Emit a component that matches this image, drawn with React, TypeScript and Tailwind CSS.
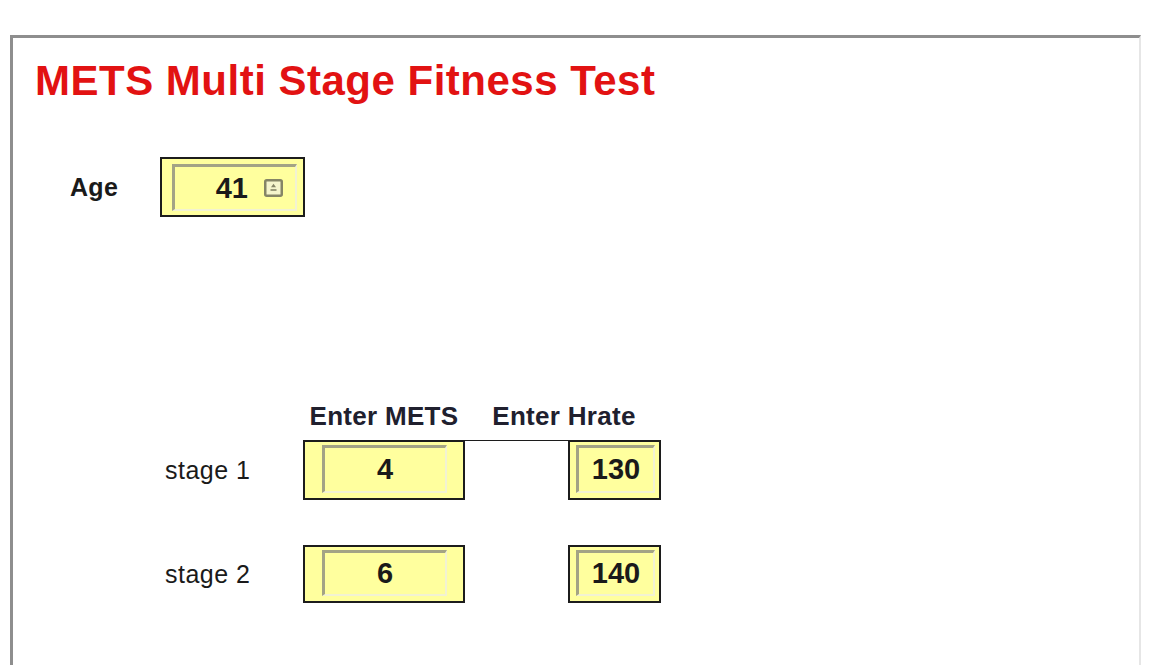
import React from "react";

const font = { fontFamily: '"Liberation Sans", Arial, sans-serif' };

function Bevel({ children, className }: { children: React.ReactNode; className: string }) {
  return (
    <div className={"flex items-center border-l-[3px] border-t-[3px] border-l-[#a3a385] border-t-[#a3a385] border-r-2 border-b-2 border-r-[#f2f2d2] border-b-[#f2f2d2] bg-[#ffff9e] " + className}>
      {children}
    </div>
  );
}

function Spinner() {
  return (
    <svg width="19" height="18" viewBox="0 0 19 18" className="block">
      <rect x="1.25" y="1.25" width="16.5" height="15.5" rx="1.5" fill="#f5f5cc" stroke="#858566" strokeWidth="2.5" />
      <path d="M9.5 4.8 L12 8.3 L7 8.3 Z" fill="#858566" />
      <line x1="6.5" y1="11" x2="12.5" y2="11" stroke="#858566" strokeWidth="1.6" />
    </svg>
  );
}

export default function App() {
  return (
    <div className="w-[1160px] h-[665px] overflow-hidden bg-white" style={font}>
      <div className="ml-[10px] mt-[35px] w-[1131px] h-[700px] border-l-[3px] border-t-[3px] border-l-[#8e8e8e] border-t-[#8e8e8e] border-r-2 border-r-[#e6e6e6]">
        <h1 className="ml-[22px] mt-[22px] text-[42px] leading-none font-bold text-[#e21212] tracking-[0.5px]">
          METS Multi Stage Fitness Test
        </h1>

        <div className="flex items-center ml-[57px] mt-[55px]">
          <div className="w-[90px] text-[25px] leading-none font-bold text-[#1a1a1a] tracking-[0.3px]">Age</div>
          <div className="w-[145px] h-[60px] border-2 border-[#1c1c1c] bg-[#ffff9e] pl-[10px] pr-[6px] pt-[5px] pb-[4px] flex">
            <Bevel className="flex-1 justify-end pr-[12px]">
              <span className="text-[29px] leading-none font-bold text-[#1a1a1a] mr-[16px]">41</span>
              <Spinner />
            </Bevel>
          </div>
        </div>

        <div className="ml-[290px] mt-[186px] flex h-[37px] items-start">
          <div className="w-[162px] text-center text-[26px] leading-none font-bold text-[#20202e] tracking-[0.3px]">Enter METS</div>
          <div className="w-[198px] text-center text-[26px] leading-none font-bold text-[#20202e] tracking-[0.3px]">Enter Hrate</div>
        </div>

        <div className="ml-[152px] flex items-start">
          <div className="w-[138px] h-[60px] flex items-center text-[25px] leading-none text-[#1a1a1a] tracking-[0.5px]">stage 1</div>
          <div className="w-[162px] h-[60px] border-2 border-[#1c1c1c] bg-[#ffff9e] pl-[17px] pr-[16px] pt-[3px] pb-[5px] flex">
            <Bevel className="flex-1 justify-center">
              <span className="text-[29px] leading-none font-bold text-[#1a1a1a]">4</span>
            </Bevel>
          </div>
          <div className="w-[105px] border-t border-[#1c1c1c] -ml-[2px]"></div>
          <div className="w-[93px] h-[60px] border-2 border-[#1c1c1c] bg-[#ffff9e] pl-[6px] pr-[4px] pt-[3px] pb-[5px] flex">
            <Bevel className="flex-1 justify-center">
              <span className="text-[29px] leading-none font-bold text-[#1a1a1a]">130</span>
            </Bevel>
          </div>
        </div>

        <div className="ml-[152px] mt-[45px] flex items-start">
          <div className="w-[138px] h-[58px] flex items-center text-[25px] leading-none text-[#1a1a1a] tracking-[0.5px]">stage 2</div>
          <div className="w-[162px] h-[58px] border-2 border-[#1c1c1c] bg-[#ffff9e] pl-[17px] pr-[16px] pt-[3px] pb-[5px] flex">
            <Bevel className="flex-1 justify-center">
              <span className="text-[29px] leading-none font-bold text-[#1a1a1a]">6</span>
            </Bevel>
          </div>
          <div className="w-[103px]"></div>
          <div className="w-[93px] h-[58px] border-2 border-[#1c1c1c] bg-[#ffff9e] pl-[6px] pr-[4px] pt-[3px] pb-[5px] flex">
            <Bevel className="flex-1 justify-center">
              <span className="text-[29px] leading-none font-bold text-[#1a1a1a]">140</span>
            </Bevel>
          </div>
        </div>
      </div>
    </div>
  );
}
